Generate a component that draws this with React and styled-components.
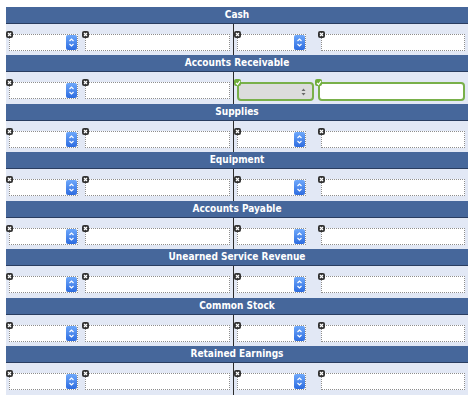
import React from 'react'
import styled, { createGlobalStyle, css } from 'styled-components'

const accounts = [
    'Cash',
    'Accounts Receivable',
    'Supplies',
    'Equipment',
    'Accounts Payable',
    'Unearned Service Revenue',
    'Common Stock',
    'Retained Earnings',
]

const GlobalStyle = createGlobalStyle`
    body {
        margin: 0;
        background: #ffffff;
        font-family: "DejaVu Sans", Verdana, sans-serif;
    }
`

const Page = styled.div`
    margin: 7px 0 0 6px;
    width: 462px;
`

const Header = styled.div`
    height: 16px;
    line-height: 16px;
    background: #46679b;
    border-bottom: 1px solid #2a3d60;
    color: #ffffff;
    font-family: "DejaVu Sans Condensed", "DejaVu Sans", sans-serif;
    font-stretch: condensed;
    font-size: 10px;
    font-weight: bold;
    text-align: center;
`

const Row = styled.div`
    display: grid;
    grid-template-columns: 227px 1px 234px;
    height: ${p => (p.$tall ? 32 : 31)}px;
    background: #e2e8f5;
`

const Divider = styled.div`
    background: #2b2b2b;
`

const Half = styled.div`
    display: flex;
    align-items: flex-start;
    gap: ${p => p.$gap}px;
    padding: 7px 3px 0 0;
`

const Field = styled.div`
    position: relative;
    padding: 3px 0 0 3px;
    flex: ${p => (p.$grow ? 1 : 'none')};
`

const Badge = styled.span`
    position: absolute;
    top: 0;
    left: 0;
    width: 7px;
    height: 7px;
    border-radius: 2px;
    background: ${p => (p.$ok ? '#6fae3c' : '#333333')};
    display: flex;
    align-items: center;
    justify-content: center;
    z-index: 1;
`

const boxBase = css`
    box-sizing: border-box;
    height: 17px;
    background: #ffffff;
    border: 1px dotted #8d8d8d;
`

const okBase = css`
    box-sizing: border-box;
    height: 19px;
    border: 2px solid #79b04a;
    border-radius: 4px;
`

const SelectBox = styled.div`
    ${p => (p.$ok ? okBase : boxBase)};
    width: ${p => (p.$ok ? 77 : 69)}px;
    background: ${p => (p.$ok ? '#dcdcdc' : '#ffffff')};
    display: flex;
    justify-content: flex-end;
    align-items: center;
`

const Stepper = styled.span`
    width: 11px;
    height: 15px;
    border-radius: 2px;
    background: linear-gradient(#6ea8fb, #2d6ce0);
    display: flex;
    align-items: center;
    justify-content: center;
`

const Arrows = styled.span`
    margin-right: 6px;
    display: flex;
    align-items: center;
`

const TextBox = styled.div`
    ${p => (p.$ok ? okBase : boxBase)};
    background: #ffffff;
`

const XMark = () => (
    <svg width="5" height="5" viewBox="0 0 5 5">
        <path d="M1 1 L4 4 M4 1 L1 4" stroke="#fff" strokeWidth="1.2" />
    </svg>
)

const Check = () => (
    <svg width="6" height="6" viewBox="0 0 6 6">
        <path d="M1 3 L2.5 4.5 L5 1.2" stroke="#fff" strokeWidth="1.2" fill="none" />
    </svg>
)

const Entry = ({ ok, gap }) => (
    <Half $gap={gap}>
        <Field>
            <Badge $ok={ok}>{ok ? <Check /> : <XMark />}</Badge>
            <SelectBox $ok={ok}>
                {ok ? (
                    <Arrows>
                        <svg width="5" height="8" viewBox="0 0 5 8">
                            <path d="M0.5 3 L2.5 0.5 L4.5 3 Z M0.5 5 L2.5 7.5 L4.5 5 Z" fill="#6a6a6a" />
                        </svg>
                    </Arrows>
                ) : (
                    <Stepper>
                        <svg width="7" height="11" viewBox="0 0 7 11">
                            <path d="M1.5 4 L3.5 2 L5.5 4 M1.5 7 L3.5 9 L5.5 7" stroke="#fff" strokeWidth="1.2" fill="none" />
                        </svg>
                    </Stepper>
                )}
            </SelectBox>
        </Field>
        <Field $grow>
            <Badge $ok={ok}>{ok ? <Check /> : <XMark />}</Badge>
            <TextBox $ok={ok} />
        </Field>
    </Half>
)

const App = () => {
    return (
        <Page>
            <GlobalStyle />
            {accounts.map((name, i) => (
                <div key={name}>
                    <Header>{name}</Header>
                    <Row $tall={i % 2 === 1}>
                        <Entry gap={4} />
                        <Divider />
                        <Entry ok={i === 1} gap={i === 1 ? 1 : 12} />
                    </Row>
                </div>
            ))}
        </Page>
    )
}

export default App
